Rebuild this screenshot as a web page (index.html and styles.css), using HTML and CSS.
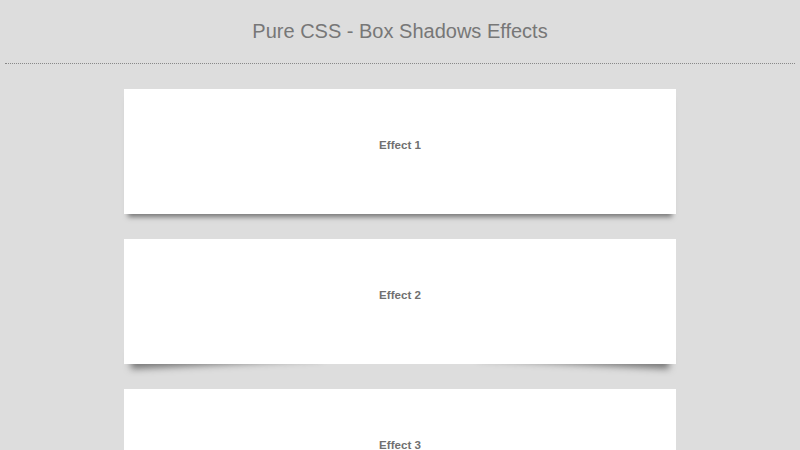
FILE: index.html
```html
<!DOCTYPE html>
<html lang="en">
<head>
  <meta charset="UTF-8">
  <meta name="viewport" content="width=device-width, initial-scale=1.0">
  <title>Pure CSS - Box Shadows Effects</title>
  <link rel="stylesheet" href="styles.css">
</head>
<body>
  <!-- Page title -->
  <div class="page-head">
    <h1>Pure CSS - Box Shadows Effects</h1>
  </div>

  <!-- Shadow samples -->
  <div class="box effect1">
    <h3>Effect 1</h3>
  </div>
  <div class="box effect2">
    <h3>Effect 2</h3>
  </div>
  <div class="box effect3">
    <h3>Effect 3</h3>
  </div>
</body>
</html>
```

FILE: styles.css
```css
body {
  margin: 0;
  padding: 0 5px;
  background: #dddddd;
  font-family: 'Liberation Sans', Arial, sans-serif;
  color: #777;
}

.page-head {
  border-bottom: 1px dotted #888;
  padding: 19px 0 20px;
  text-align: center;
}

.page-head h1 {
  margin: 0;
  font-size: 20px;
  font-weight: normal;
  line-height: 24px;
}

.box {
  width: 552px;
  height: 125px;
  background: #fff;
  margin: 25px auto;
}

.box h3 {
  margin: 0;
  padding-top: 49px;
  font-size: 11.6px;
  line-height: 14px;
  text-align: center;
  color: #707070;
}

/* Effect 1: soft shadow under the bottom edge */
.effect1 {
  box-shadow: 0 7px 5px -4px #777;
}

/* Effect 2: lifted corners */
.effect2 {
  position: relative;
}

.effect2:before,
.effect2:after {
  z-index: -1;
  position: absolute;
  content: "";
  bottom: 10px;
  left: 6px;
  width: 50%;
  top: 80%;
  max-width: 190px;
  background: #777;
  box-shadow: 0 10px 7px #777;
  transform: rotate(-3deg);
}

.effect2:after {
  transform: rotate(3deg);
  right: 6px;
  left: auto;
}
```
